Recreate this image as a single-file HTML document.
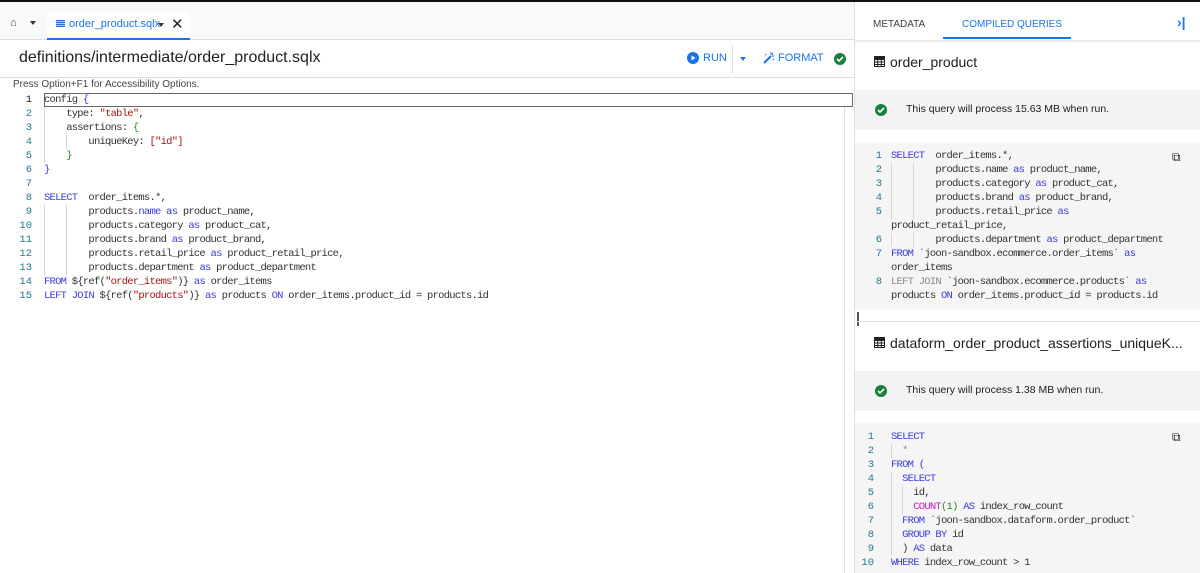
<!DOCTYPE html>
<html><head><meta charset="utf-8"><style>
*{margin:0;padding:0;box-sizing:border-box}
body{width:1200px;height:573px;overflow:hidden;background:#fff;font-family:"Liberation Sans",sans-serif;color:#202124;position:relative}
.abs{position:absolute}
.mono{font-family:"Liberation Mono",monospace;font-size:10.5px;letter-spacing:-0.75px;white-space:pre}
.kw{color:#3b3bdc}.str{color:#a31515}.grn{color:#2a8a2a}.pink{color:#c41bbf}.gr{color:#888}
.ln{color:#237893;text-align:right;width:22px;position:absolute;letter-spacing:0}
.line{position:absolute;height:14px;line-height:14px}
.guide{position:absolute;width:1px;background:#d6d6d6}
</style></head><body>
<div class="abs" style="left:0;top:0;width:1200px;height:2px;background:#111"></div>
<div class="abs" style="left:0;top:2px;width:855px;height:38px;background:#f8f9fa;border-bottom:1px solid #dadce0"></div>
<div class="abs" style="left:10px;top:17px;font-size:11px;color:#444">⌂</div>
<div class="abs" style="left:30px;top:21px;width:0;height:0;border-left:3px solid transparent;border-right:3px solid transparent;border-top:4px solid #333"></div>
<div class="abs" style="left:47px;top:12px;width:143px;height:28px;background:#fff;border-bottom:2px solid #1a73e8"></div>
<div class="abs" style="left:56px;top:20px;width:9px;height:7px;background:repeating-linear-gradient(#1a73e8 0 1px,#a8c7fa 1px 2px)"></div>
<div class="abs" style="left:69px;top:18px;font-size:11px;color:#1a73e8">order_product.sqlx</div>
<div class="abs" style="left:158px;top:23px;width:0;height:0;border-left:3px solid transparent;border-right:3px solid transparent;border-top:4px solid #333"></div>
<div class="abs" style="left:171px;top:15px;font-size:15px;color:#222">✕</div>
<div class="abs" style="left:19px;top:49px;font-size:16px;color:#202124">definitions/intermediate/order_product.sqlx</div>
<div class="abs" style="left:0;top:77px;width:855px;height:1px;background:#dadce0"></div>
<svg class="abs" style="left:687px;top:52px" width="12" height="12"><circle cx="6" cy="6" r="6" fill="#1a73e8"/><path d="M4.5 3.5L8.5 6L4.5 8.5Z" fill="#fff"/></svg>
<div class="abs" style="left:703px;top:52px;font-size:11px;color:#1a73e8">RUN</div>
<div class="abs" style="left:732px;top:45px;width:1px;height:28px;background:#dadce0"></div>
<div class="abs" style="left:740px;top:57px;width:0;height:0;border-left:3px solid transparent;border-right:3px solid transparent;border-top:4px solid #1a73e8"></div>
<svg class="abs" style="left:762px;top:51px" width="14" height="14"><path d="M2 12L9 5" stroke="#1a73e8" stroke-width="2"/><path d="M9 1v3M11 2l-1 2M12 5h-2M3 3l1 1M12 9l-1-1" stroke="#1a73e8" stroke-width="1"/></svg>
<div class="abs" style="left:778px;top:52px;font-size:11px;color:#1a73e8">FORMAT</div>
<svg class="abs" style="left:834px;top:53px" width="12" height="12"><circle cx="6" cy="6" r="6" fill="#188038"/><path d="M3 6l2 2 4-4" stroke="#fff" stroke-width="1.6" fill="none"/></svg>
<div class="abs" style="left:13px;top:79px;font-size:10px;color:#444">Press Option+F1 for Accessibility Options.</div>
<div class="abs" style="left:844px;top:106px;width:1px;height:467px;background:#ddd"></div>
<div class="abs" style="left:44px;top:93px;width:809px;height:14px;border:1px solid #666"></div>
<div class="mono abs" style="left:0;top:93px;width:844px;color:#333">
<div class="line" style="top:0"><span class="ln" style="left:10px;color:#222">1</span><span style="position:absolute;left:44px">config <span class="kw">{</span></span></div>
<div class="line" style="top:14px"><span class="ln" style="left:10px">2</span><span style="position:absolute;left:44px">    type: <span class="str">"table"</span>,</span></div>
<div class="line" style="top:28px"><span class="ln" style="left:10px">3</span><span style="position:absolute;left:44px">    assertions: <span class="grn">{</span></span></div>
<div class="line" style="top:42px"><span class="ln" style="left:10px">4</span><span style="position:absolute;left:44px">        uniqueKey: <span class="str">["id"]</span></span></div>
<div class="line" style="top:56px"><span class="ln" style="left:10px">5</span><span style="position:absolute;left:44px">    <span class="grn">}</span></span></div>
<div class="line" style="top:70px"><span class="ln" style="left:10px">6</span><span style="position:absolute;left:44px"><span class="kw">}</span></span></div>
<div class="line" style="top:84px"><span class="ln" style="left:10px">7</span></div>
<div class="line" style="top:98px"><span class="ln" style="left:10px">8</span><span style="position:absolute;left:44px"><span class="kw">SELECT</span>  order_items.*,</span></div>
<div class="line" style="top:112px"><span class="ln" style="left:10px">9</span><span style="position:absolute;left:44px">        products.<span class="kw">name</span> <span class="kw">as</span> product_name,</span></div>
<div class="line" style="top:126px"><span class="ln" style="left:10px">10</span><span style="position:absolute;left:44px">        products.category <span class="kw">as</span> product_cat,</span></div>
<div class="line" style="top:140px"><span class="ln" style="left:10px">11</span><span style="position:absolute;left:44px">        products.brand <span class="kw">as</span> product_brand,</span></div>
<div class="line" style="top:154px"><span class="ln" style="left:10px">12</span><span style="position:absolute;left:44px">        products.retail_price <span class="kw">as</span> product_retail_price,</span></div>
<div class="line" style="top:168px"><span class="ln" style="left:10px">13</span><span style="position:absolute;left:44px">        products.department <span class="kw">as</span> product_department</span></div>
<div class="line" style="top:182px"><span class="ln" style="left:10px">14</span><span style="position:absolute;left:44px"><span class="kw">FROM</span> ${ref(<span class="str">"order_items"</span>)} <span class="kw">as</span> order_items</span></div>
<div class="line" style="top:196px"><span class="ln" style="left:10px">15</span><span style="position:absolute;left:44px"><span class="kw">LEFT JOIN</span> ${ref(<span class="str">"products"</span>)} <span class="kw">as</span> products <span class="kw">ON</span> order_items.product_id = products.id</span></div>
</div>
<div class="guide" style="left:44px;top:107px;height:56px"></div>
<div class="guide" style="left:66px;top:135px;height:14px"></div>
<div class="guide" style="left:44px;top:205px;height:70px"></div>
<div class="guide" style="left:66px;top:205px;height:70px"></div>
<div class="abs" style="left:854px;top:2px;width:1px;height:571px;background:#e0e0e0"></div>
<div class="abs" style="left:855px;top:40px;width:345px;height:2px;background:#e8eaed"></div>
<div class="abs" style="left:873px;top:19px;font-size:10px;color:#3c4043">METADATA</div>
<div class="abs" style="left:962px;top:19px;font-size:10px;color:#1a73e8">COMPILED QUERIES</div>
<div class="abs" style="left:943px;top:37px;width:128px;height:2px;background:#1a73e8"></div>
<div class="abs" style="left:1177px;top:14px;font-size:14px;color:#1a73e8;font-weight:bold">›|</div>
<svg class="abs" style="left:874px;top:56px" width="11" height="11"><rect x="0.5" y="0.5" width="10" height="10" fill="none" stroke="#222"/><path d="M0 3.5h11M0 6h11M0 8.5h11M3.7 3v8M7.3 3v8" stroke="#222" stroke-width="1"/><rect x="0" y="0" width="11" height="3" fill="#222"/></svg>
<div class="abs" style="left:890px;top:54px;font-size:14px">order_product</div>
<div class="abs" style="left:855px;top:90px;width:345px;height:40px;background:#f1f3f4"></div>
<svg class="abs" style="left:875px;top:104px" width="12" height="12"><circle cx="6" cy="6" r="6" fill="#188038"/><path d="M3 6l2 2 4-4" stroke="#fff" stroke-width="1.6" fill="none"/></svg>
<div class="abs" style="left:906px;top:103px;font-size:10.5px">This query will process 15.63 MB when run.</div>
<div class="abs" style="left:855px;top:143px;width:345px;height:166px;background:#f5f5f5"></div>
<div class="abs" style="left:1172px;top:150px;font-size:12px">⧉</div>
<div class="mono abs" style="left:855px;top:149px;color:#333">
<div class="line" style="top:0"><span class="ln" style="left:5px;width:22px">1</span><span style="position:absolute;left:36px"><span class="kw">SELECT</span>  order_items.*,</span></div>
<div class="line" style="top:14px"><span class="ln" style="left:5px">2</span><span style="position:absolute;left:36px">        products.name <span class="kw">as</span> product_name,</span></div>
<div class="line" style="top:28px"><span class="ln" style="left:5px">3</span><span style="position:absolute;left:36px">        products.category <span class="kw">as</span> product_cat,</span></div>
<div class="line" style="top:42px"><span class="ln" style="left:5px">4</span><span style="position:absolute;left:36px">        products.brand <span class="kw">as</span> product_brand,</span></div>
<div class="line" style="top:56px"><span class="ln" style="left:5px">5</span><span style="position:absolute;left:36px">        products.retail_price <span class="kw">as</span></span></div>
<div class="line" style="top:70px"><span style="position:absolute;left:36px">product_retail_price,</span></div>
<div class="line" style="top:84px"><span class="ln" style="left:5px">6</span><span style="position:absolute;left:36px">        products.department <span class="kw">as</span> product_department</span></div>
<div class="line" style="top:98px"><span class="ln" style="left:5px">7</span><span style="position:absolute;left:36px"><span class="kw">FROM</span> `joon-sandbox.ecommerce.order_items` <span class="kw">as</span></span></div>
<div class="line" style="top:112px"><span style="position:absolute;left:36px">order_items</span></div>
<div class="line" style="top:126px"><span class="ln" style="left:5px">8</span><span style="position:absolute;left:36px"><span class="gr">LEFT JOIN</span> `joon-sandbox.ecommerce.products` <span class="kw">as</span></span></div>
<div class="line" style="top:140px"><span style="position:absolute;left:36px">products <span class="kw">ON</span> order_items.product_id = products.id</span></div>
</div>
<div class="guide" style="left:891px;top:163px;height:56px"></div>
<div class="guide" style="left:913px;top:163px;height:56px"></div>
<div class="guide" style="left:891px;top:233px;height:14px"></div>
<div class="guide" style="left:913px;top:233px;height:14px"></div>
<div class="abs" style="left:857px;top:312px;width:2px;height:14px;background:#555"></div>
<div class="abs" style="left:855px;top:321px;width:345px;height:1px;background:#e0e0e0"></div>
<svg class="abs" style="left:874px;top:337px" width="11" height="11"><rect x="0.5" y="0.5" width="10" height="10" fill="none" stroke="#222"/><path d="M0 3.5h11M0 6h11M0 8.5h11M3.7 3v8M7.3 3v8" stroke="#222" stroke-width="1"/><rect x="0" y="0" width="11" height="3" fill="#222"/></svg>
<div class="abs" style="left:890px;top:335px;font-size:14px">dataform_order_product_assertions_uniqueK...</div>
<div class="abs" style="left:855px;top:371px;width:345px;height:40px;background:#f1f3f4"></div>
<svg class="abs" style="left:875px;top:385px" width="12" height="12"><circle cx="6" cy="6" r="6" fill="#188038"/><path d="M3 6l2 2 4-4" stroke="#fff" stroke-width="1.6" fill="none"/></svg>
<div class="abs" style="left:906px;top:384px;font-size:10.5px">This query will process 1.38 MB when run.</div>
<div class="abs" style="left:855px;top:423px;width:345px;height:150px;background:#f5f5f5"></div>
<div class="abs" style="left:1172px;top:430px;font-size:12px">⧉</div>
<div class="mono abs" style="left:855px;top:430px;color:#333">
<div class="line" style="top:0"><span class="ln" style="left:-3px">1</span><span style="position:absolute;left:36px" class="kw">SELECT</span></div>
<div class="line" style="top:14px"><span class="ln" style="left:-3px">2</span><span style="position:absolute;left:36px" class="gr">  *</span></div>
<div class="line" style="top:28px"><span class="ln" style="left:-3px">3</span><span style="position:absolute;left:36px"><span class="kw">FROM (</span></span></div>
<div class="line" style="top:42px"><span class="ln" style="left:-3px">4</span><span style="position:absolute;left:36px"><span class="kw">  SELECT</span></span></div>
<div class="line" style="top:56px"><span class="ln" style="left:-3px">5</span><span style="position:absolute;left:36px">    id,</span></div>
<div class="line" style="top:70px"><span class="ln" style="left:-3px">6</span><span style="position:absolute;left:36px">    <span class="pink">COUNT</span><span class="grn">(1)</span> <span class="kw">AS</span> index_row_count</span></div>
<div class="line" style="top:84px"><span class="ln" style="left:-3px">7</span><span style="position:absolute;left:36px">  <span class="kw">FROM</span> `joon-sandbox.dataform.order_product`</span></div>
<div class="line" style="top:98px"><span class="ln" style="left:-3px">8</span><span style="position:absolute;left:36px">  <span class="kw">GROUP BY</span> id</span></div>
<div class="line" style="top:112px"><span class="ln" style="left:-3px">9</span><span style="position:absolute;left:36px">  ) <span class="kw">AS</span> data</span></div>
<div class="line" style="top:126px"><span class="ln" style="left:-3px">10</span><span style="position:absolute;left:36px"><span class="kw">WHERE</span> index_row_count &gt; 1</span></div>
</div>
<div class="guide" style="left:891px;top:444px;height:14px"></div>
<div class="guide" style="left:891px;top:472px;height:84px"></div>
<div class="guide" style="left:902px;top:486px;height:28px"></div>
</body></html>
